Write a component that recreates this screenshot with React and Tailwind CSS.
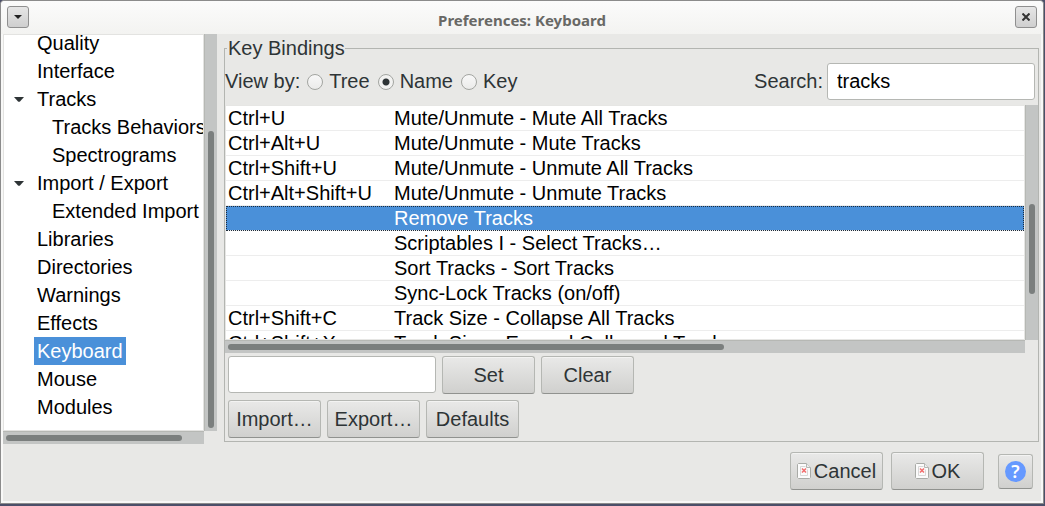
import clsx from 'clsx';

const categories = [
    { name: 'Quality' },
    { name: 'Interface' },
    { name: 'Tracks', open: true },
    { name: 'Tracks Behaviors', child: true },
    { name: 'Spectrograms', child: true },
    { name: 'Import / Export', open: true },
    { name: 'Extended Import', child: true },
    { name: 'Libraries' },
    { name: 'Directories' },
    { name: 'Warnings' },
    { name: 'Effects' },
    { name: 'Keyboard', active: true },
    { name: 'Mouse' },
    { name: 'Modules' },
];

const bindings = [
    { keys: 'Ctrl+U', command: 'Mute/Unmute - Mute All Tracks' },
    { keys: 'Ctrl+Alt+U', command: 'Mute/Unmute - Mute Tracks' },
    { keys: 'Ctrl+Shift+U', command: 'Mute/Unmute - Unmute All Tracks' },
    { keys: 'Ctrl+Alt+Shift+U', command: 'Mute/Unmute - Unmute Tracks' },
    { keys: '', command: 'Remove Tracks', selected: true },
    { keys: '', command: 'Scriptables I - Select Tracks…' },
    { keys: '', command: 'Sort Tracks - Sort Tracks' },
    { keys: '', command: 'Sync-Lock Tracks (on/off)' },
    { keys: 'Ctrl+Shift+C', command: 'Track Size - Collapse All Tracks' },
    { keys: 'Ctrl+Shift+X', command: 'Track Size - Expand Collapsed Tracks' },
];

const Button = ({ children, className, ...props }) => (
    <button
        type="button"
        className={clsx(
            'flex items-center justify-center rounded-[3px] border border-[#b5b7b3] border-b-[#90928f] bg-linear-to-b from-[#e9e9e8] to-[#d0d0ce] shadow-[inset_0_1px_0_#f3f3f2]',
            className
        )}
        {...props}
    >
        {children}
    </button>
);

const TitleButton = ({ label, children }) => (
    <button
        type="button"
        aria-label={label}
        className="flex size-[22px] items-center justify-center rounded-[3px] border border-[#8f8f8f] bg-linear-to-b from-[#e6e6e6] to-[#cfcfcf]"
    >
        {children}
    </button>
);

const Arrow = () => (
    <svg width="10" height="5" viewBox="0 0 10 5" fill="#2e3436" aria-hidden="true">
        <path d="M0 0h10L6 4.4Q5 5.2 4 4.4Z" />
    </svg>
);

const MissingIcon = () => (
    <svg width="14" height="16" viewBox="0 0 14 16" fill="none" aria-hidden="true">
        <path d="M1.500.5h8l4 4v10l-1 1h-11l-1-1v-13Z" fill="#fbfbfb" stroke="#a9aba7" />
        <path d="M9.500.5v4h4" fill="#eee" stroke="#b5b7b3" />
        <path d="M3.500 3.500h5M3.500 3.500v9h7v-6" stroke="#d8d8d8" />
        <path d="M5 5.500l4 4M9 5.500l-4 4" stroke="#f26d6d" strokeWidth="1.500" />
    </svg>
);

const Radio = ({ label, ...props }) => (
    <label className="flex items-center gap-1.5">
        <input
            type="radio"
            name="view"
            className="size-4 appearance-none rounded-full border border-[#a3a5a1] bg-linear-to-b from-[#f8f8f8] to-[#ebebea] checked:bg-[radial-gradient(circle,#2e3436_2px,#2e3436_3px,#f2f2f1_4px)]"
            {...props}
        />
        <span className="pb-0.5">{label}</span>
    </label>
);

const App = () => {
    return (
        <div className="min-h-screen bg-[#4b4f69] pr-px pb-0.5 font-['Liberation_Sans',Arial,sans-serif] text-[20px] leading-6 text-[#2e3436]">
            <div className="rounded-t-[4px] border border-[#8b8b8b] bg-[#f8f8f7]">
                <header className="flex h-[33px] items-center justify-between rounded-t-[4px] bg-linear-to-b from-[#fbfbfb] to-[#f3f3f1] px-1.5 pb-px">
                    <TitleButton label="Window menu">
                        <svg width="8" height="4" viewBox="0 0 8 4" fill="#222" aria-hidden="true">
                            <path d="M0 0h8L4 4Z" />
                        </svg>
                    </TitleButton>
                    <h1 className="pt-1.5 font-['Noto_Sans','Open_Sans',sans-serif] text-[15px] leading-5 font-bold text-[#686865]">
                        Preferences: Keyboard
                    </h1>
                    <TitleButton label="Close">
                        <svg width="8" height="8" viewBox="0 0 8 8" stroke="#333" strokeWidth="2" aria-hidden="true">
                            <path d="M.5.5l7 7M7.5.5l-7 7" />
                        </svg>
                    </TitleButton>
                </header>

                <div className="mx-0.5 mb-0.5 bg-[#e8e8e6]">
                    <main className="flex items-start gap-[7px] pr-0.5">
                        {/* Category tree */}
                        <nav className="w-[214px] shrink-0">
                            <div className="flex h-[397px]">
                                <div className="flex-1 overflow-hidden border border-[#e3e3e1] bg-white">
                                    <ul className="-mt-1.5 text-black">
                                        {categories.map((item) => (
                                            <li
                                                key={item.name}
                                                className={clsx('flex h-7 items-center whitespace-nowrap', item.child ? 'pl-[45px]' : 'pl-[30px]')}
                                            >
                                                {item.open && (
                                                    <span className="-ml-5 w-5">
                                                        <Arrow />
                                                    </span>
                                                )}
                                                <a href="#" className={clsx('px-[3px] leading-7', item.active && 'bg-[#4a90d9] text-white')}>
                                                    {item.name}
                                                </a>
                                            </li>
                                        ))}
                                    </ul>
                                </div>
                                <div className="w-[13px] border-l border-[#b6b8b4] bg-[#c3c5c4] pt-[97px] pl-[3px]">
                                    <div className="h-[297px] w-1.5 rounded-full bg-[#7b7f7e]" />
                                </div>
                            </div>
                            <div className="mr-[13px] h-[13px] border-t border-[#b6b8b4] bg-[#c3c5c4] px-[3px] pt-[3px]">
                                <div className="h-1.5 w-[90%] rounded-full bg-[#7b7f7e]" />
                            </div>
                        </nav>

                        <fieldset className="mt-0.5 min-w-0 flex-1 border border-[#b3b5b1]">
                            <legend className="ml-0.5 pl-px">Key Bindings</legend>

                            <div className="flex items-center justify-between pt-[3px] pr-[3px] pb-[5px]">
                                <div className="flex items-center gap-2">
                                    <span className="-mr-px pb-0.5">View by:</span>
                                    <Radio label="Tree" />
                                    <Radio label="Name" defaultChecked />
                                    <Radio label="Key" />
                                </div>
                                <label className="flex items-center gap-1">
                                    <span className="pb-0.5">Search:</span>
                                    <input
                                        type="text"
                                        defaultValue="tracks"
                                        className="h-[37px] w-52 rounded-[3px] border border-[#b5b7b3] bg-white px-[9px] text-black"
                                    />
                                </label>
                            </div>

                            {/* Bindings list */}
                            <div className="flex h-[235px]">
                                <div className="min-w-0 flex-1 overflow-hidden border border-[#e6e6e4] bg-white">
                                    <table className="w-full table-fixed border-separate border-spacing-0 text-black">
                                        <colgroup>
                                            <col className="w-[168px]" />
                                            <col />
                                        </colgroup>
                                        <tbody>
                                            {bindings.map((row) => (
                                                <tr
                                                    key={row.command}
                                                    className={clsx(row.selected && 'bg-[#4a90d9] text-white outline outline-dotted -outline-offset-1 outline-[#1d2b3a]')}
                                                >
                                                    <td className="h-[25px] w-[166px] border-b border-[#ededed] p-0 pl-0.5 whitespace-nowrap">{row.keys}</td>
                                                    <td className="h-[25px] border-b border-[#ededed] p-0 whitespace-nowrap">{row.command}</td>
                                                </tr>
                                            ))}
                                        </tbody>
                                    </table>
                                </div>
                                <div className="w-[13px] border-l border-[#b6b8b4] bg-[#c3c5c4] pt-[99px] pl-[3px]">
                                    <div className="h-[90px] w-1.5 rounded-full bg-[#7b7f7e]" />
                                </div>
                            </div>
                            <div className="mr-[13px] h-[13px] border-t border-[#b6b8b4] bg-[#c3c5c4] px-[3px] pt-[3px]">
                                <div className="h-1.5 w-5/8 rounded-full bg-[#7b7f7e]" />
                            </div>

                            <div className="flex gap-1.5 p-[3px]">
                                <input
                                    type="text"
                                    aria-label="Short cut"
                                    className="h-[37px] w-52 rounded-[3px] border border-[#b5b7b3] bg-white px-[9px] text-black"
                                />
                                <Button className="h-[38px] w-[93px]">Set</Button>
                                <Button className="h-[38px] w-[93px]">Clear</Button>
                            </div>
                            <div className="flex gap-1.5 p-[3px]">
                                <Button className="h-[38px] w-[93px]">Import…</Button>
                                <Button className="h-[38px] w-[93px]">Export…</Button>
                                <Button className="h-[38px] w-[93px]">Defaults</Button>
                            </div>
                        </fieldset>
                    </main>

                    <footer className="flex items-center justify-end gap-2 pt-2 pr-2 pb-[11px]">
                        <Button className="h-[38px] w-[93px] gap-[3px]">
                            <MissingIcon />
                            Cancel
                        </Button>
                        <Button className="h-[38px] w-[93px] gap-[3px]">
                            <MissingIcon />
                            OK
                        </Button>
                        <Button aria-label="Help" className="ml-1.5 size-[35px]">
                            <span className="flex size-[21px] items-center justify-center rounded-full bg-[#6699ff] font-['Noto_Sans',sans-serif] text-[18px] font-semibold text-white">
                                ?
                            </span>
                        </Button>
                    </footer>
                </div>
            </div>
        </div>
    );
};

export default App;
